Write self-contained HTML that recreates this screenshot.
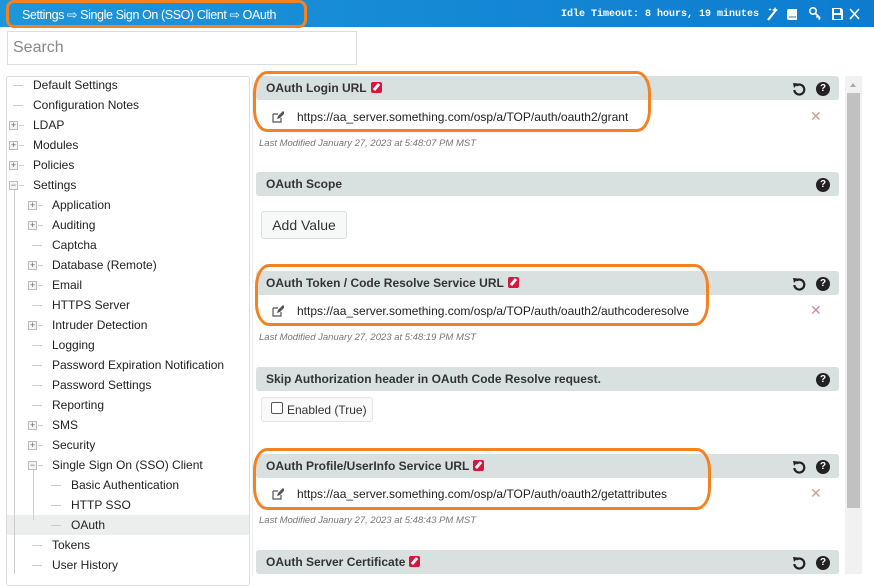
<!DOCTYPE html>
<html><head><meta charset="utf-8"><style>
*{box-sizing:border-box;margin:0;padding:0}
body{width:874px;height:574px;overflow:hidden;background:#fff;font-family:"Liberation Sans",Arial,sans-serif;color:#333;position:relative;font-size:12px}
.a{position:absolute}
#top{left:0;top:0;width:874px;height:27px;background:linear-gradient(90deg,#1e96da,#0d7ccf)}
.ring{position:absolute;border:3px solid #f58220;border-radius:14px/22px}
.ti{position:absolute;height:20px;line-height:20px;font-size:12px;color:#222;white-space:nowrap}
.bx{position:absolute;width:9px;height:9px;border:1px solid #bbb;background:#f4f4f4;font-size:9px;line-height:7px;text-align:center;color:#666}
.hd{position:absolute;left:256px;width:583px;height:24px;background:#d9e0e0;border-radius:3px;font-size:12px;font-weight:bold;color:#333;line-height:24px;padding-left:10px}
.ed{display:inline-block;width:11px;height:11px;background:#d6163a;border-radius:2px;vertical-align:-1px;margin-left:4px;position:relative}
.ed:after{content:"";position:absolute;left:4px;top:1px;width:3px;height:8px;background:#fff;transform:rotate(40deg)}
.ic{position:absolute;width:14px;height:14px;font-size:12px;text-align:center;line-height:14px}
.q{background:#222;color:#fff;border-radius:50%;font-weight:bold;font-size:10px}
.val{position:absolute;left:297px;font-size:12px;color:#222}
.pen{position:absolute;left:272px}
.x{position:absolute;left:810px;font-size:14px;color:#c9a08a}
.lm{position:absolute;left:259px;font-size:9.5px;font-style:italic;color:#777}
</style></head><body>
<div id="top" class="a"></div>
<div class="a" style="left:22px;top:7px;color:#fff;font-size:12.5px;letter-spacing:-0.4px">Settings ⇨ Single Sign On (SSO) Client ⇨ OAuth</div>
<div class="ring" style="left:6px;top:0;width:301px;height:28px;border-radius:8px"></div>
<div class="a" style="left:561px;top:9px;color:#fff;font-family:'Liberation Mono',monospace;font-size:10px;font-weight:bold">Idle Timeout: 8 hours, 19 minutes</div>
<svg class="a" style="left:766px;top:5px" width="100" height="18" viewBox="0 0 100 18" fill="#fff" stroke="#fff">
<path d="M2 15 L10 5" stroke-width="2.2" fill="none"/><path d="M9 2 l1 2 2 1-2 1-1 2-1-2-2-1 2-1z" stroke="none"/><path d="M4 3 l.5 1 1 .5-1 .5-.5 1-.5-1-1-.5 1-.5z" stroke="none"/>
<path d="M23 4 h8 v11 h-8 a2 2 0 0 1 -2 -2 v-7 a2 2 0 0 1 2 -2z" stroke="none"/><path d="M23 12 h7" stroke="#0d7ccf" stroke-width="1"/>
<circle cx="47" cy="6" r="3.2" stroke-width="1.6" fill="none"/><path d="M49 8 l5 5 M52 11 l-1.5 1.5 M54 13 l-1.5 1.5" stroke-width="1.8" fill="none"/>
<path d="M66 3 h9 l2 2 v10 h-11z" stroke="none"/><rect x="68" y="4" width="6" height="4" fill="#0d7ccf" stroke="none"/><rect x="68" y="10" width="7" height="4" fill="#0d7ccf" stroke="none"/>
<path d="M84 4 l9 10 M93 4 l-9 10" stroke-width="1.6" fill="none"/>
</svg>

<div class="a" style="left:7px;top:31px;width:350px;height:34px;border:1px solid #ddd;font-size:16px;color:#888;line-height:32px;padding-left:5px">Search</div>

<div class="a" style="left:6px;top:76px;width:244px;height:510px;border:1px solid #ddd;border-radius:3px"></div>
<div class="a" style="left:7px;top:515px;width:242px;height:20px;background:#eceeee"></div>
<div class="a" style="left:14px;top:190px;width:1px;height:384px;background:#ccc"></div>
<div class="a" style="left:33px;top:470px;width:1px;height:50px;background:#ccc"></div>

<div class="a" style="left:252px;top:76px;width:1px;height:500px;background:#eee"></div>

<div id="tree"></div>
<script>
var it=[["Default Settings",0,""],["Configuration Notes",0,""],["LDAP",0,"+"],["Modules",0,"+"],["Policies",0,"+"],["Settings",0,"−"],["Application",1,"+"],["Auditing",1,"+"],["Captcha",1,""],["Database (Remote)",1,"+"],["Email",1,"+"],["HTTPS Server",1,""],["Intruder Detection",1,"+"],["Logging",1,""],["Password Expiration Notification",1,""],["Password Settings",1,""],["Reporting",1,""],["SMS",1,"+"],["Security",1,"+"],["Single Sign On (SSO) Client",1,"−"],["Basic Authentication",2,""],["HTTP SSO",2,""],["OAuth",2,""],["Tokens",1,""],["User History",1,""]];
var h="";
for(var i=0;i<it.length;i++){var y=75+20*i,l=it[i][1],tx=33+19*l,bx=9+19*l;
if(it[i][2])h+='<div class="bx" style="left:'+bx+'px;top:'+(y+6)+'px">'+it[i][2]+'</div><div class="a" style="left:'+(bx+10)+'px;top:'+(y+10)+'px;width:5px;height:1px;background:#ccc"></div>';
else h+='<div class="a" style="left:'+(bx+4)+'px;top:'+(y+10)+'px;width:10px;height:1px;background:#ccc"></div>';
h+='<div class="ti" style="left:'+tx+'px;top:'+y+'px">'+it[i][0]+'</div>';}
document.getElementById("tree").innerHTML=h;
</script>

<div class="a" style="left:845px;top:76px;width:17px;height:498px;background:#f1f1f1"></div>
<div class="a" style="left:847px;top:93px;width:13px;height:415px;background:#c1c1c1"></div>
<div class="a" style="left:850px;top:80px;width:0;height:0;border:3px solid transparent;border-bottom:4px solid #aaa"></div>

<svg width="0" height="0" style="position:absolute"><defs>
<symbol id="rl" viewBox="0 0 14 14"><path d="M4.2 3.6 A5 5 0 1 1 2.3 8" fill="none" stroke="#222" stroke-width="2.2"/><path d="M1 1 L6 1.5 L2 6z" fill="#222"/></symbol>
<symbol id="pn" viewBox="0 0 12 12"><path d="M1 3 h5 M1 3 v8 h8 v-4" fill="none" stroke="#555" stroke-width="1.2"/><path d="M5 8 l1-3 5-5 2 2-5 5z" fill="#555"/></symbol>
</defs></svg>

<div class="hd" style="top:76px">OAuth Login URL<span class="ed"></span></div>
<svg class="a" style="left:792px;top:82px" width="14" height="14"><use href="#rl"/></svg><div class="ic q" style="left:816px;top:82px">?</div>
<svg class="pen" style="top:111px" width="12" height="12"><use href="#pn"/></svg><div class="val" style="top:110px">https://aa_server.something.com/osp/a/TOP/auth/oauth2/grant</div>
<div class="x" style="top:108px">✕</div>
<div class="lm" style="top:138px">Last Modified January 27, 2023 at 5:48:07 PM MST</div>
<div class="ring" style="left:253px;top:71px;width:398px;height:61px"></div>

<div class="hd" style="top:172px">OAuth Scope</div>
<div class="ic q" style="left:816px;top:178px">?</div>
<div class="a" style="left:261px;top:211px;width:86px;height:28px;border:1px solid #ddd;border-radius:3px;background:#f7f8f8;font-size:14px;line-height:26px;text-align:center;color:#333">Add Value</div>

<div class="hd" style="top:271px">OAuth Token / Code Resolve Service URL<span class="ed"></span></div>
<svg class="a" style="left:792px;top:277px" width="14" height="14"><use href="#rl"/></svg><div class="ic q" style="left:816px;top:277px">?</div>
<svg class="pen" style="top:305px" width="12" height="12"><use href="#pn"/></svg><div class="val" style="top:304px">https://aa_server.something.com/osp/a/TOP/auth/oauth2/authcoderesolve</div>
<div class="x" style="top:302px;color:#c98aa8">✕</div>
<div class="lm" style="top:332px">Last Modified January 27, 2023 at 5:48:19 PM MST</div>
<div class="ring" style="left:255px;top:264px;width:454px;height:62px"></div>

<div class="hd" style="top:367px">Skip Authorization header in OAuth Code Resolve request.</div>
<div class="ic q" style="left:816px;top:373px">?</div>
<div class="a" style="left:261px;top:397px;width:112px;height:25px;border:1px solid #e4e4e4;border-radius:3px;background:#f9f9f9;font-size:12px;line-height:25px;padding-left:25px;color:#333">Enabled (True)</div>
<div class="a" style="left:271px;top:402px;width:12px;height:12px;border:1px solid #555;border-radius:2px;background:#fff"></div>

<div class="hd" style="top:454px">OAuth Profile/UserInfo Service URL<span class="ed"></span></div>
<svg class="a" style="left:792px;top:460px" width="14" height="14"><use href="#rl"/></svg><div class="ic q" style="left:816px;top:460px">?</div>
<svg class="pen" style="top:488px" width="12" height="12"><use href="#pn"/></svg><div class="val" style="top:487px">https://aa_server.something.com/osp/a/TOP/auth/oauth2/getattributes</div>
<div class="x" style="top:485px">✕</div>
<div class="lm" style="top:515px">Last Modified January 27, 2023 at 5:48:43 PM MST</div>
<div class="ring" style="left:253px;top:448px;width:458px;height:62px"></div>

<div class="hd" style="top:550px">OAuth Server Certificate<span class="ed"></span></div>
<svg class="a" style="left:792px;top:556px" width="14" height="14"><use href="#rl"/></svg><div class="ic q" style="left:816px;top:556px">?</div>
</body></html>
